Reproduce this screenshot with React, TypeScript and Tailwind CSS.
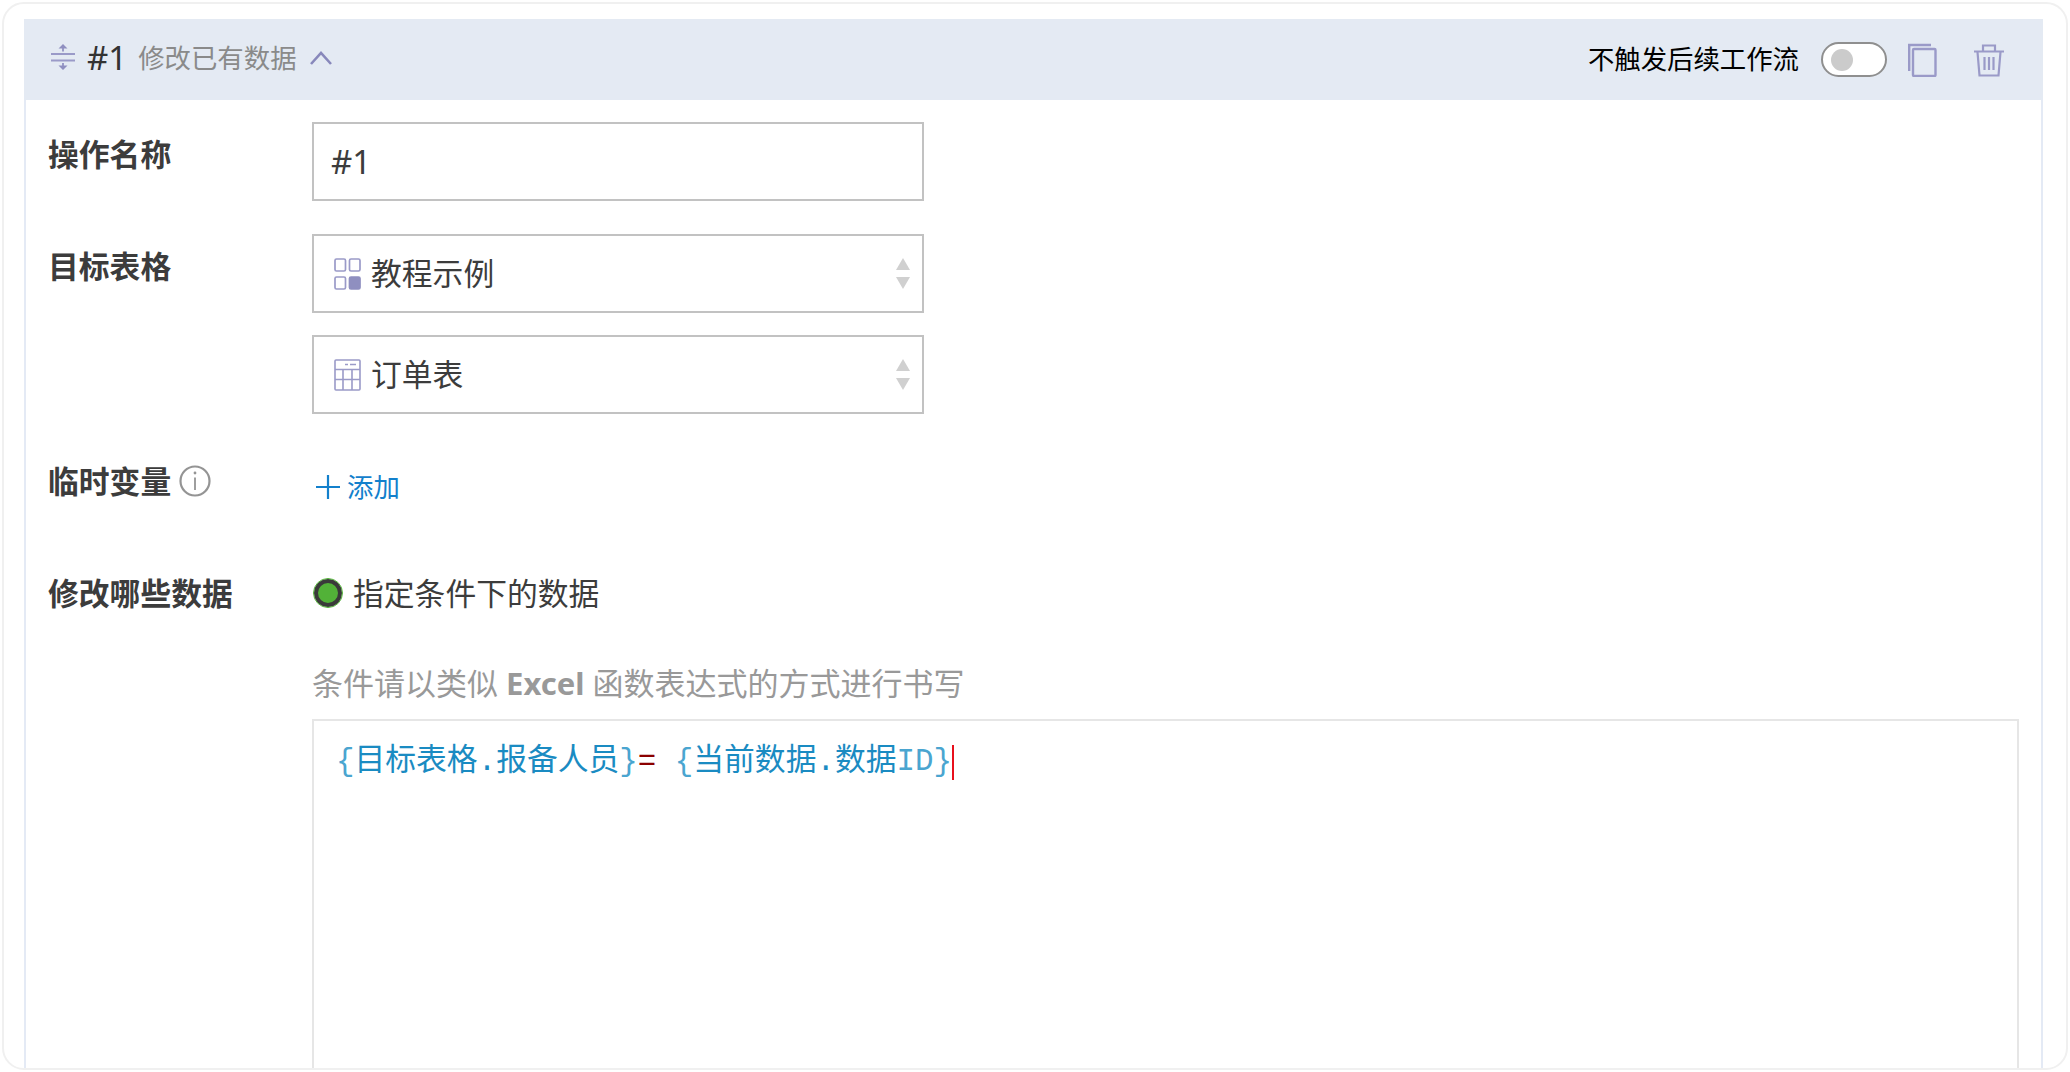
const CJK = '"Noto Sans", "Noto Sans CJK SC", sans-serif';
const ic = '#9a9ac8';

function SplitIcon() {
  return (
    <svg width="24" height="26" viewBox="0 0 24 26" fill="none" stroke={ic} strokeWidth="1.8">
      <path d="M0 10h24M0 16.5h24" />
      <path d="M12 3v4.5M12 19v4" strokeWidth="2" />
      <path d="M7.5 4.5L12 0l4.5 4.5zM7.5 21.5L12 26l4.5-4.5z" fill="#8f8fc0" stroke="none" />
    </svg>
  );
}

function CopyIcon() {
  return (
    <svg width="30" height="34" viewBox="0 0 30 34" fill="none" stroke={ic} strokeWidth="2.4">
      <path d="M24 2H2.2v26" />
      <rect x="6" y="6" width="22.5" height="27" rx="1" />
    </svg>
  );
}

function TrashIcon() {
  return (
    <svg width="32" height="34" viewBox="0 0 32 34" fill="none" stroke={ic} strokeWidth="2.2">
      <path d="M1 8.5h30M10 8V2.5h12V8" />
      <path d="M4.5 9l2 23.5h19l2-23.5" />
      <path d="M11.5 14v13M16 14v13M20.5 14v13" />
    </svg>
  );
}

function AppsIcon() {
  return (
    <svg width="27" height="32" viewBox="0 0 27 32" fill="none" stroke={ic} strokeWidth="1.7">
      <rect x="1" y="1" width="10.5" height="12" rx="1.5" />
      <rect x="15.5" y="1" width="10.5" height="12" rx="1.5" />
      <rect x="1" y="19" width="10.5" height="12" rx="1.5" />
      <rect x="15.5" y="19" width="10.5" height="12" rx="1.5" fill="#8f8fc0" stroke="#8f8fc0" />
    </svg>
  );
}

function TableIcon() {
  return (
    <svg width="27" height="32" viewBox="0 0 27 32" fill="none" stroke={ic} strokeWidth="1.6">
      <rect x="1" y="1" width="25" height="30" rx="1" />
      <path d="M1 10.5h25M1 20.5h25M9 10.5V31M18 10.5V31" />
      <path d="M11 5.5h3M16 5.5h6" strokeWidth="1.5" />
    </svg>
  );
}

function Arrows() {
  return (
    <div className="flex flex-col gap-[7px]">
      <svg width="14" height="12" viewBox="0 0 14 12"><path d="M7 0l7 12H0z" fill="#d0d0d0" /></svg>
      <svg width="14" height="12" viewBox="0 0 14 12"><path d="M7 12L0 0h14z" fill="#d0d0d0" /></svg>
    </div>
  );
}

function Label({ children }: { children: React.ReactNode }) {
  return <div className="w-[264px] shrink-0 text-[30.8px] leading-[42px] font-bold text-[#3c3c3c]">{children}</div>;
}

function Select({ icon, text }: { icon: React.ReactNode; text: string }) {
  return (
    <div className="w-[612px] h-[79px] border-2 border-[#c2c2c2] flex items-center pl-[20px] pr-[12px]">
      {icon}
      <span className="ml-[10px] text-[30.8px] leading-[42px] -mt-[2px] text-[#3c3c3c] flex-1">{text}</span>
      <Arrows />
    </div>
  );
}

export default function App() {
  return (
    <div className="h-[1072px] w-[2070px] bg-white p-[2px] overflow-hidden" style={{ fontFamily: CJK }}>
      <div className="h-full border-2 border-[#f0f0f0] rounded-[22px] pt-[15px] pl-[20px] pr-[23px]">
        <div className="h-full border-x-2 border-[#e4eaf5] flex flex-col">
          <div className="-mx-[2px] h-[81px] shrink-0 bg-[#e4eaf3] flex items-center pl-[27px] pr-[38px]">
            <div className="-mt-[6px]"><SplitIcon /></div>
            <span className="ml-[12px] text-[33px] leading-[42px] -mt-[4px] text-[#333]">#1</span>
            <span className="ml-[11px] text-[26.4px] leading-[42px] -mt-[4px] text-[#8a8a8a]">修改已有数据</span>
            <svg className="ml-[12px] -mt-[3px]" width="24" height="16" viewBox="0 0 24 16" fill="none" stroke="#8888bb" strokeWidth="2.6">
              <path d="M2 14L12 3l10 11" />
            </svg>
            <div className="flex-1" />
            <span className="text-[26.4px] leading-[42px] -mt-[2px] text-black">不触发后续工作流</span>
            <div className="ml-[22px] w-[66px] h-[35px] rounded-full border-2 border-[#8f8f8f] bg-white flex items-center pl-[8px]">
              <div className="w-[22px] h-[22px] rounded-full bg-[#cbcbcb]" />
            </div>
            <div className="ml-[20px]"><CopyIcon /></div>
            <div className="ml-[36px]"><TrashIcon /></div>
          </div>

          <div className="flex-1 pl-[22px] pr-[22px] pt-[22px] flex flex-col min-h-0">
            <div className="flex">
              <Label><div className="pt-[11px]">操作名称</div></Label>
              <div className="w-[612px] h-[79px] border-2 border-[#c2c2c2] flex items-center pl-[17px] text-[33px] text-[#3c3c3c]">#1</div>
            </div>

            <div className="flex mt-[33px]">
              <Label><div className="pt-[11px]">目标表格</div></Label>
              <div className="flex flex-col gap-[22px]">
                <Select icon={<AppsIcon />} text="教程示例" />
                <Select icon={<TableIcon />} text="订单表" />
              </div>
            </div>

            <div className="flex mt-[46px]">
              <Label>
                <div className="flex items-center">
                  临时变量
                  <svg className="ml-[8px]" width="32" height="32" viewBox="0 0 32 32" fill="none" stroke="#949494" strokeWidth="2.2">
                    <circle cx="16" cy="16" r="14.5" />
                    <path d="M16 12.5v12.5" strokeWidth="1.8" />
                    <circle cx="16" cy="8" r="1.4" fill="#949494" stroke="none" />
                  </svg>
                </div>
              </Label>
              <div className="flex items-center h-[42px] mt-[6px] text-[#1380cc]">
                <svg width="24" height="24" viewBox="0 0 24 24" fill="none" stroke="#1380cc" strokeWidth="2.2" className="ml-[4px]">
                  <path d="M12 0v24M0 12h24" />
                </svg>
                <span className="ml-[7px] text-[26.4px] leading-[42px]">添加</span>
              </div>
            </div>

            <div className="flex mt-[64px]">
              <Label>修改哪些数据</Label>
              <div className="flex items-center h-[42px]">
                <div className="ml-[2px] w-[28px] h-[28px] rounded-full bg-[#52b238] border-[4px] border-[#3a3a3a] outline-1 outline-[#52b238]" />
                <span className="ml-[11px] text-[30.8px] leading-[42px] text-[#3c3c3c]">指定条件下的数据</span>
              </div>
            </div>

            <div className="pl-[264px] flex-1 flex flex-col min-h-0 mt-[48px]">
              <div className="text-[31px] leading-[42px] text-[#999]"><span>条件请以类似 <b className="font-bold">Excel</b> 函数表达式的方式进行书写</span></div>
              <div className="flex-1 mt-[15px] border-2 border-b-0 border-[#e6e6e6] pl-[22px] pt-[18px]">
                <div className="flex items-center h-[46px] text-[30.8px] text-[#1a8bc2] whitespace-pre" style={{ fontFamily: '"Liberation Mono", "Noto Sans CJK SC", monospace' }}>
                  <span className="text-[#4aa5d0]">{'{'}</span>
                  <span>目标表格.报备人员</span>
                  <span className="text-[#4aa5d0]">{'}'}</span>
                  <span className="text-[#8b0000]">=</span>
                  <span className="text-[#4aa5d0]">{' {'}</span>
                  <span>当前数据.数据</span>
                  <span className="text-[#4aa5d0]">{'ID}'}</span>
                  <span className="w-[2px] h-[35px] bg-[#e8101c]" />
                </div>
              </div>
            </div>
          </div>
        </div>
      </div>
    </div>
  );
}
